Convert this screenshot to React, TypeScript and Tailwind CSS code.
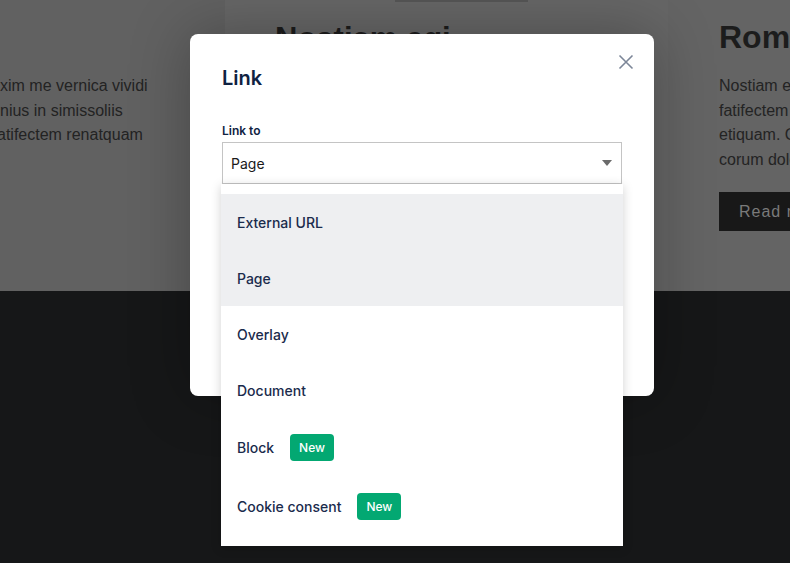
const options = [
  { label: "External URL", active: true },
  { label: "Page", active: true },
  { label: "Overlay" },
  { label: "Document" },
  { label: "Block", isNew: true },
  { label: "Cookie consent", isNew: true },
]

const Backdrop = () => {
  return (
    <div className="absolute inset-0 flex flex-col font-['Liberation_Sans',Arial,sans-serif]">
      <div className="h-[291px] grid grid-cols-[225px_443px_1fr]">
        <div className="bg-[#616161] pt-[74px] text-[16px] leading-[24.5px] text-[#232323] whitespace-nowrap overflow-hidden">
          <div>xim me vernica vividi</div>
          <div>nius in simissoliis</div>
          <div className="-ml-[3px]">atifectem renatquam</div>
        </div>
        <div className="bg-[#666666] relative overflow-hidden">
          <div className="absolute left-[170px] top-0 w-[133px] h-[2px] bg-[#565656]" />
          <h2 className="pl-[50px] pt-[16px] text-[31px] font-bold text-[#1c1c1c] whitespace-nowrap">
            Nostiam eqi
          </h2>
        </div>
        <div className="bg-[#646464] pl-[51px] pt-[17px] overflow-hidden whitespace-nowrap">
          <h2 className="text-[32px] font-bold leading-[40px] text-[#1c1c1c]">Roma quis</h2>
          <div className="mt-[17px] text-[16px] leading-[24.5px] text-[#232323]">
            <div>Nostiam eqi tiam</div>
            <div>fatifectem rena</div>
            <div>etiquam. Cons</div>
            <div>corum dolest</div>
          </div>
          <div className="mt-[20px] h-[39px] w-[140px] bg-[#181818] pl-[20px] flex items-center text-[16px] tracking-[1px] text-[#7a7a7a]">
            Read more
          </div>
        </div>
      </div>
      <div className="flex-1 bg-[#161718]" />
    </div>
  )
}

const LinkDialog = () => {
  return (
    <div className="absolute left-[190px] top-[34px] w-[464px] h-[362px] rounded-[8px] bg-white px-8 pt-[31px] shadow-[0_0_60px_rgba(0,0,0,0.28)] font-['Inter','Noto_Sans',sans-serif]">
      <button className="absolute right-[20px] top-[20px] w-[16px] h-[16px] text-[#7c8698]">
        <svg viewBox="0 0 16 16" className="w-full h-full" fill="none" stroke="currentColor" strokeWidth="1.6">
          <path d="M1.5 1.5l13 13M14.5 1.5l-13 13" />
        </svg>
      </button>
      <h1 className="text-[20px] font-semibold leading-[26px] text-[#0f2242]">Link</h1>
      <div className="mt-[32px] text-[12px] font-semibold leading-[16px] text-[#0f2242]">Link to</div>
      <div className="relative mt-[3px]">
        <div className="h-[42px] border border-[#c4c4c4] flex items-center pl-[8px] pr-[9px] text-[14px] text-[#1a1a1a]">
          <span className="flex-1">Page</span>
          <svg viewBox="0 0 10 6" className="w-[10px] h-[6px]">
            <path d="M0 0h10L5 6z" fill="#6b6b6b" />
          </svg>
        </div>
        <div className="absolute left-[-1px] right-[-1px] top-full bg-white py-[10px] shadow-[0_2px_10px_rgba(0,0,0,0.18)]">
          {options.map((o) => (
            <div
              key={o.label}
              className={`flex items-center pl-4 text-[14px] font-medium text-[#1a2b4c] ${
                o.isNew ? "h-[59px]" : "h-[56px]"
              } ${o.active ? "bg-[#eeeff1]" : ""}`}
            >
              <span>{o.label}</span>
              {o.isNew && (
                <span className="ml-4 h-[27px] px-[9px] rounded-[4px] bg-[#03a872] text-white text-[12px] font-medium flex items-center">
                  New
                </span>
              )}
            </div>
          ))}
        </div>
      </div>
    </div>
  )
}

const App = () => {
  return (
    <div className="relative w-[790px] h-[563px] overflow-hidden">
      <Backdrop />
      <LinkDialog />
    </div>
  )
}

export default App
